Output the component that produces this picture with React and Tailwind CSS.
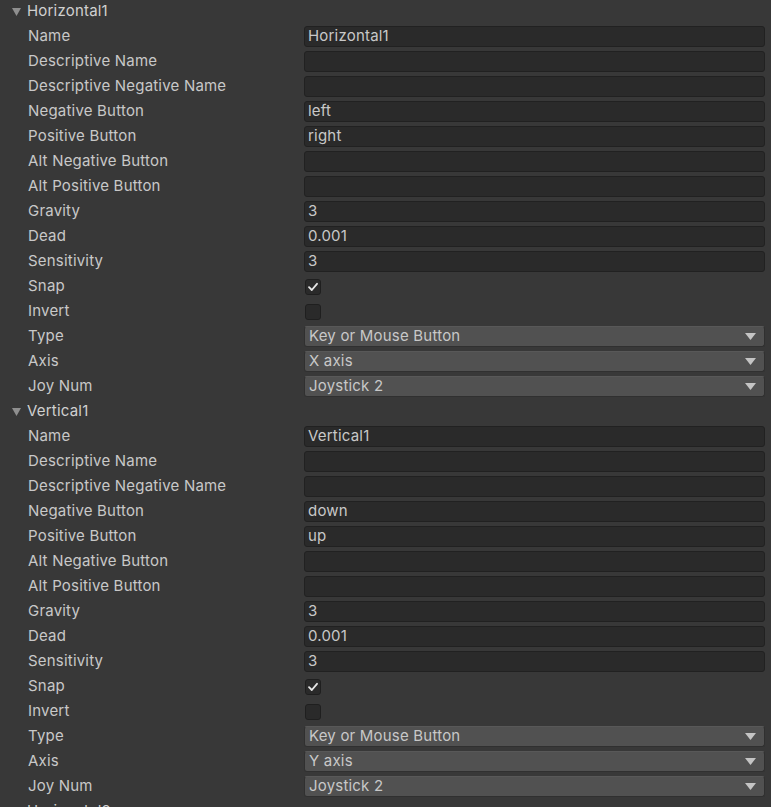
import React from 'react';

const makeAxis = (name, neg, pos, axis) => [
    { label: 'Name', kind: 'text', value: name },
    { label: 'Descriptive Name', kind: 'text', value: '' },
    { label: 'Descriptive Negative Name', kind: 'text', value: '' },
    { label: 'Negative Button', kind: 'text', value: neg },
    { label: 'Positive Button', kind: 'text', value: pos },
    { label: 'Alt Negative Button', kind: 'text', value: '' },
    { label: 'Alt Positive Button', kind: 'text', value: '' },
    { label: 'Gravity', kind: 'text', value: '3' },
    { label: 'Dead', kind: 'text', value: '0.001' },
    { label: 'Sensitivity', kind: 'text', value: '3' },
    { label: 'Snap', kind: 'check', value: true },
    { label: 'Invert', kind: 'check', value: false },
    { label: 'Type', kind: 'select', value: 'Key or Mouse Button' },
    { label: 'Axis', kind: 'select', value: axis },
    { label: 'Joy Num', kind: 'select', value: 'Joystick 2' },
];

const AXES = [
    { title: 'Horizontal1', rows: makeAxis('Horizontal1', 'left', 'right', 'X axis') },
    { title: 'Vertical1', rows: makeAxis('Vertical1', 'down', 'up', 'Y axis') },
    { title: 'Horizontal2', rows: [] },
];

function Field({ row }) {
    if (row.kind === 'check') {
        return (
            <div className="w-4 h-4 ml-px rounded-[3px] bg-[#2a2a2a] border border-[#1f1f1f] flex items-center justify-center">
                {row.value && (
                    <svg width="12" height="12" viewBox="0 0 12 12">
                        <path d="M2 6.2 L4.8 9 L10 2.8" fill="none" stroke="#e6e6e6" strokeWidth="1.8" strokeLinecap="round" strokeLinejoin="round" />
                    </svg>
                )}
            </div>
        );
    }
    if (row.kind === 'select') {
        return (
            <div className="h-[21px] flex-1 rounded-[3px] bg-[#515151] border border-[#303030] border-t-[#585858] flex items-center justify-between pl-1 pr-2">
                <span>{row.value}</span>
                <svg width="11" height="7" viewBox="0 0 11 7">
                    <path d="M0 0 H11 L5.5 7 Z" fill="#c4c4c4" />
                </svg>
            </div>
        );
    }
    return (
        <div className="h-[21px] flex-1 rounded-[3px] bg-[#2a2a2a] border border-[#212121] flex items-center px-[3px]">
            <span>{row.value}</span>
        </div>
    );
}

export default function App() {
    return (
        <div className="bg-[#383838] text-[#c8c8c8] text-[15px] tracking-[0.2px] w-[771px] h-[807px] overflow-hidden" style={{ fontFamily: 'Inter, "Noto Sans", sans-serif' }}>
            <div className="-mt-px">
                {AXES.map(axis => (
                    <div key={axis.title}>
                        <div className="h-[25px] flex items-center">
                            <svg className="ml-[12px] mr-[6px]" width="9" height="8" viewBox="0 0 9 8">
                                <path d="M0 0 H9 L4.5 8 Z" fill="#8f8f8f" />
                            </svg>
                            <span className="text-[#d0d0d0]">{axis.title}</span>
                        </div>
                        {axis.rows.map(row => (
                            <div key={row.label} className="h-[25px] flex items-center pr-[6px]">
                                <div className="w-[304px] pl-[28px] shrink-0">{row.label}</div>
                                <Field row={row} />
                            </div>
                        ))}
                    </div>
                ))}
            </div>
        </div>
    );
}
